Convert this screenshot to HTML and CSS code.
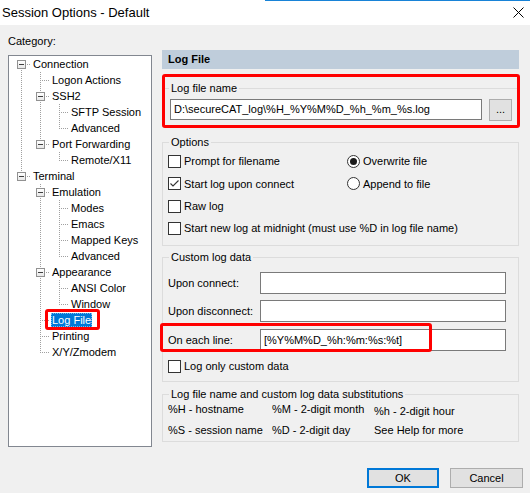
FILE: index.html
```html
<!DOCTYPE html>
<html>
<head>
<meta charset="utf-8">
<title>Session Options - Default</title>
<link rel="stylesheet" href="styles.css">
</head>
<body>
<div class="window">
  <div class="titlebar">
    <span class="title">Session Options - Default</span>
    <svg class="close" width="11" height="11" viewBox="0 0 11 11"><path d="M0.5 0.5L10.5 10.5M10.5 0.5L0.5 10.5" stroke="#000" stroke-width="1"/></svg>
  </div>
  <div class="main">
    <div class="left">
      <div class="cat-label">Category:</div>
      <div class="tree">
        <div class="row"><span class="c first"><i class="box"></i></span><span class="t">Connection</span></div>
        <div class="row"><span class="c v"></span><span class="c tee"></span><span class="t">Logon Actions</span></div>
        <div class="row"><span class="c v"></span><span class="c tee"><i class="box"></i></span><span class="t">SSH2</span></div>
        <div class="row"><span class="c v"></span><span class="c v"></span><span class="c tee"></span><span class="t">SFTP Session</span></div>
        <div class="row"><span class="c v"></span><span class="c v"></span><span class="c elbow"></span><span class="t">Advanced</span></div>
        <div class="row"><span class="c v"></span><span class="c elbow"><i class="box"></i></span><span class="t">Port Forwarding</span></div>
        <div class="row"><span class="c v"></span><span class="c"></span><span class="c elbow"></span><span class="t">Remote/X11</span></div>
        <div class="row"><span class="c elbow"><i class="box"></i></span><span class="t">Terminal</span></div>
        <div class="row"><span class="c"></span><span class="c tee"><i class="box"></i></span><span class="t">Emulation</span></div>
        <div class="row"><span class="c"></span><span class="c v"></span><span class="c tee"></span><span class="t">Modes</span></div>
        <div class="row"><span class="c"></span><span class="c v"></span><span class="c tee"></span><span class="t">Emacs</span></div>
        <div class="row"><span class="c"></span><span class="c v"></span><span class="c tee"></span><span class="t">Mapped Keys</span></div>
        <div class="row"><span class="c"></span><span class="c v"></span><span class="c elbow"></span><span class="t">Advanced</span></div>
        <div class="row"><span class="c"></span><span class="c tee"><i class="box"></i></span><span class="t">Appearance</span></div>
        <div class="row"><span class="c"></span><span class="c v"></span><span class="c tee"></span><span class="t">ANSI Color</span></div>
        <div class="row"><span class="c"></span><span class="c v"></span><span class="c elbow"></span><span class="t">Window</span></div>
        <div class="row hl-row"><span class="c"></span><span class="c tee"></span><span class="t sel">Log File</span><div class="redbox rb-tree"></div></div>
        <div class="row"><span class="c"></span><span class="c tee"></span><span class="t">Printing</span></div>
        <div class="row"><span class="c"></span><span class="c elbow"></span><span class="t">X/Y/Zmodem</span></div>
      </div>
    </div>

    <div class="right">
      <div class="header">Log File</div>

      <div class="hl-wrap">
        <div class="group g-name">
          <div class="gtitle">Log file name</div>
          <div class="fname">
            <div class="field fname-input">D:\secureCAT_log\%H_%Y%M%D_%h_%m_%s.log</div>
            <div class="btn browse">...</div>
          </div>
        </div>
        <div class="redbox rb1"></div>
      </div>

      <div class="group g-opts">
        <div class="gtitle">Options</div>
        <div class="opts">
          <div class="opt"><span class="cb"></span>Prompt for filename</div>
          <div class="opt"><span class="rb on"></span>Overwrite file</div>
          <div class="opt"><span class="cb"><svg width="11" height="11" viewBox="0 0 11 11"><path d="M1.5 5.5L4 8L9.5 2.5" fill="none" stroke="#333" stroke-width="1.1"/></svg></span>Start log upon connect</div>
          <div class="opt"><span class="rb"></span>Append to file</div>
          <div class="opt span2"><span class="cb"></span>Raw log</div>
          <div class="opt span2"><span class="cb"></span>Start new log at midnight (must use %D in log file name)</div>
        </div>
      </div>

      <div class="group g-custom">
        <div class="gtitle">Custom log data</div>
        <div class="crow r1"><span class="clabel">Upon connect:</span><div class="field cfield"></div></div>
        <div class="crow r2"><span class="clabel">Upon disconnect:</span><div class="field cfield"></div></div>
        <div class="crow r3"><span class="clabel">On each line:</span><div class="field cfield">[%Y%M%D_%h:%m:%s:%t]</div><div class="redbox rb2"></div></div>
        <div class="opt only"><span class="cb"></span>Log only custom data</div>
      </div>

      <div class="group g-subst">
        <div class="gtitle">Log file name and custom log data substitutions</div>
        <div class="subst">
          <span>%H - hostname</span><span>%M - 2-digit month</span><span class="low">%h - 2-digit hour</span>
          <span>%S - session name</span><span>%D - 2-digit day</span><span>See Help for more</span>
        </div>
      </div>

      <div class="buttons">
        <div class="btn ok">OK</div>
        <div class="btn cancel">Cancel</div>
      </div>
    </div>
  </div>
</div>
</body>
</html>
```

FILE: styles.css
```css
* { box-sizing: border-box; }
html, body { margin: 0; padding: 0; }
body {
  width: 530px;
  height: 493px;
  overflow: hidden;
  background: #f0f0f0;
  font-family: "Liberation Sans", Arial, sans-serif;
  font-size: 11px;
  color: #000;
}
:root {
  --dv: repeating-linear-gradient(to bottom, #a0a0a0 0 1px, transparent 1px 2px);
  --dh: repeating-linear-gradient(to right, #a0a0a0 0 1px, transparent 1px 2px);
}
.window { width: 530px; height: 493px; background: #f0f0f0; }

.titlebar {
  height: 25px;
  background: linear-gradient(to right, #ffffff 265px, #1883d7 265px) top / 100% 1px no-repeat, #fff;
  display: flex;
  align-items: center;
  justify-content: space-between;
  padding: 0 6px 0 2px;
}
.title { font-size: 13px; line-height: 16px; }
.close { display: block; }

.main { display: flex; padding-left: 8px; }
.left { width: 144px; padding-top: 8px; }
.cat-label { height: 16px; line-height: 16px; }
.tree {
  margin-top: 6px;
  height: 392px;
  border: 1px solid #828790;
  background: #fff;
  padding-left: 3px;
}
.row { display: flex; height: 16px; position: relative; }
.c { width: 19px; height: 16px; flex: none; display: flex; align-items: flex-start; background-repeat: no-repeat; }
.v { background-image: var(--dv); background-position: 9px 0; background-size: 1px 16px; }
.tee { background-image: var(--dv), var(--dh); background-position: 9px 0, 9px 8px; background-size: 1px 16px, 10px 1px; }
.elbow { background-image: var(--dv), var(--dh); background-position: 9px 0, 9px 8px; background-size: 1px 9px, 10px 1px; }
.first { background-image: var(--dv), var(--dh); background-position: 9px 8px, 9px 8px; background-size: 1px 8px, 10px 1px; }
.box {
  display: block;
  width: 9px;
  height: 9px;
  margin: 4px 0 0 5px;
  border: 1px solid #919191;
  background: linear-gradient(#404040, #404040) center / 5px 1px no-repeat, linear-gradient(#ffffff, #e8e8e8);
}
.t { margin-left: 1px; padding: 0 1px; line-height: 16px; height: 16px; white-space: nowrap; }
.t.sel { background: #0078d7; color: #fff; line-height: 14px; height: 14px; margin-top: 1px; outline: 1px dotted #7ab8ee; outline-offset: -1px; }

.redbox { position: absolute; border: 3px solid #ff0000; border-radius: 3px; pointer-events: none; }
.rb-tree { left: 33px; top: -3px; width: 55px; height: 21px; }

.right { width: 357px; margin-left: 10px; padding-top: 25px; }
.header {
  height: 19px;
  line-height: 19px;
  background: #bfcddb;
  font-weight: bold;
  padding-left: 6px;
}

.group { border: 1px solid #dcdcdc; }
.gtitle {
  display: block;
  width: max-content;
  margin: -8px 0 0 6px;
  padding: 0 2px;
  height: 14px;
  line-height: 14px;
  background: #f0f0f0;
}

.hl-wrap { position: relative; margin-top: 19px; }
.rb1 { left: 0; top: -14px; width: 358px; height: 54px; }
.g-name { padding: 0 5px 5px 7px; }
.g-name .gtitle { margin-left: -1px; }
.fname { display: flex; margin-top: 4px; gap: 7px; align-items: flex-start; }

.field {
  background: #fff;
  border: 1px solid #7a7a7a;
  height: 21px;
  line-height: 19px;
  padding-left: 3px;
  white-space: nowrap;
  overflow: hidden;
}
.fname-input { width: 312px; }
.btn {
  background: #e1e1e1;
  border: 1px solid #adadad;
  display: flex;
  align-items: center;
  justify-content: center;
}
.browse { width: 23px; height: 22px; padding-bottom: 2px; }

.g-opts { margin-top: 15px; padding-bottom: 6px; }
.opts {
  display: grid;
  grid-template-columns: 179px 1fr;
  grid-template-rows: 22px 23px 22px 22px;
  padding-left: 5px;
  margin-top: 1px;
}
.opt { display: flex; align-items: center; white-space: nowrap; }
.span2 { grid-column: 1 / 3; }
.cb {
  width: 13px;
  height: 13px;
  flex: none;
  border: 1px solid #333;
  background: #fff;
  margin-right: 3px;
  display: flex;
  align-items: center;
  justify-content: center;
}
.cb svg { display: block; }
.rb {
  width: 13px;
  height: 13px;
  flex: none;
  border: 1px solid #333;
  border-radius: 50%;
  background: #fff;
  margin-right: 3px;
  display: flex;
  align-items: center;
  justify-content: center;
}
.rb.on::after { content: ""; width: 7px; height: 7px; border-radius: 50%; background: #1a1a1a; }

.g-custom { margin-top: 11px; padding: 0 0 7px 5px; }
.g-custom .gtitle { margin-left: 1px; }
.crow { display: flex; align-items: center; position: relative; }
.r1 { margin-top: 8px; }
.r2 { margin-top: 6px; }
.r3 { margin-top: 7px; }
.clabel { width: 92px; flex: none; white-space: nowrap; }
.cfield { width: 246px; height: 22px; line-height: 20px; }
.rb2 { left: -8px; top: -6px; width: 272px; height: 29px; }
.only { height: 16px; margin-top: 7px; }

.g-subst { margin-top: 12px; padding: 0 0 3px 5px; }
.g-subst .gtitle { margin-left: 1px; }
.subst {
  display: grid;
  grid-template-columns: 104px 102px 1fr;
  grid-template-rows: 16px 16px;
  row-gap: 5px;
  line-height: 16px;
  white-space: nowrap;
}
.subst .low { padding-top: 2px; }

.buttons { display: flex; justify-content: flex-end; gap: 11px; margin-top: 26px; margin-right: -4px; }
.buttons .btn { height: 20px; }
.ok { width: 72px; border: 2px solid #0078d7; }
.cancel { width: 73px; }
```
